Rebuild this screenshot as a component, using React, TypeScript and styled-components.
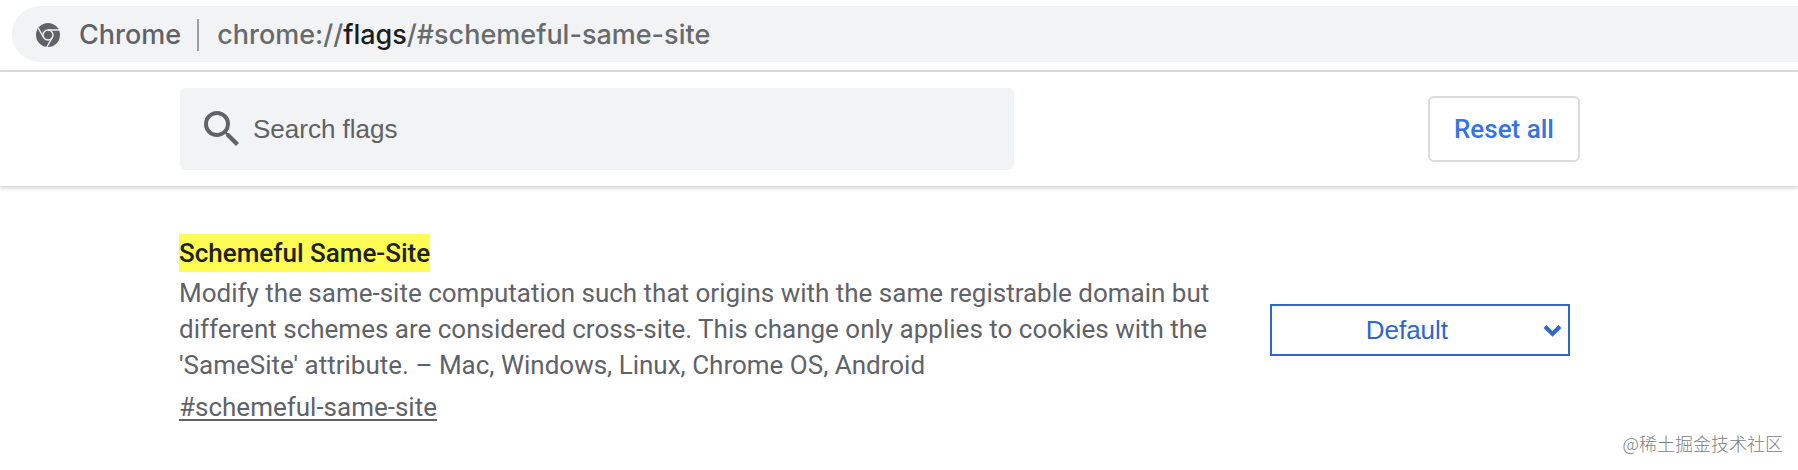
import React from "react";
import styled, { createGlobalStyle } from "styled-components";

const GlobalStyle = createGlobalStyle`
  *, *::before, *::after { box-sizing: border-box; }
  body {
    margin: 0;
    background: #fff;
    color: #5f6368;
    font-family: Roboto, "Liberation Sans", sans-serif;
    font-size: 26px;
    line-height: 36px;
  }
`;

const Toolbar = styled.header`
  padding: 6px 0 8px 12px;
  border-bottom: 2px solid #dadce0;
`;

const Omnibox = styled.div`
  display: flex;
  align-items: center;
  height: 56px;
  padding-top: 1px;
  padding-left: 24px;
  border-radius: 28px 0 0 28px;
  background: #f1f3f4;
  font-family: Inter, "Liberation Sans", sans-serif;
  font-size: 27px;
  font-weight: 500;
  white-space: nowrap;
`;

const SiteChip = styled.button`
  display: flex;
  align-items: center;
  gap: 19px;
  padding: 0;
  border: 0;
  background: none;
  color: #5f6368;
  font: inherit;
`;

const Separator = styled.span`
  width: 2px;
  height: 32px;
  margin: 0 18px 0 16px;
  background: #9e9fa1;
`;

const Address = styled.span`
  color: #686a6c;
`;

const Host = styled.span`
  color: #1b1c1e;
`;

const FlagsHeader = styled.div`
  display: flex;
  align-items: center;
  justify-content: space-between;
  padding: 16px 218px 16px 180px;
  box-shadow: 0 2px 4px rgba(0, 0, 0, 0.18);
`;

const SearchBox = styled.label`
  display: flex;
  align-items: center;
  gap: 7px;
  flex: 0 1 834px;
  height: 82px;
  padding: 0 18px;
  border-radius: 6px;
  background: #f1f3f4;
`;

const SearchInput = styled.input`
  flex: 1;
  min-width: 0;
  padding: 0;
  border: 0;
  outline: 0;
  background: none;
  color: #202124;
  font: 26px/36px "Liberation Sans", Arial, sans-serif;

  &::placeholder {
    color: #616161;
    opacity: 1;
  }
`;

const ResetButton = styled.button`
  height: 66px;
  padding: 0 24px;
  border: 2px solid #dadce0;
  border-radius: 6px;
  background: #fff;
  color: #3574e2;
  font: 500 26px/36px Roboto, sans-serif;
  white-space: nowrap;
`;

const Experiment = styled.main`
  display: grid;
  grid-template-columns: minmax(0, 3fr) minmax(0, 1fr);
  align-items: center;
  padding: 48px 218px 0 179px;
`;

const Title = styled.h1`
  width: fit-content;
  margin: 0 0 3px;
  background: #fffc54;
  color: #202124;
  font-size: 26px;
  font-weight: 500;
  line-height: 38px;
`;

const Description = styled.p`
  margin: 0 0 6px;
`;

const Permalink = styled.a`
  color: inherit;
  text-underline-offset: 3px;
  text-decoration-thickness: 2px;
`;

const SelectWrap = styled.div`
  position: relative;
  margin: 0 10px 0 40px;
`;

const Select = styled.select`
  display: block;
  width: 100%;
  height: 52px;
  padding: 0 26px 0 0;
  border: 2px solid #2f67ca;
  border-radius: 0;
  appearance: none;
  background: #fff;
  color: #2f67ca;
  font: 26px/36px "Liberation Sans", Arial, sans-serif;
  text-align: center;
  text-align-last: center;
`;

const Chevron = styled.svg`
  position: absolute;
  top: 20px;
  right: 8px;
  pointer-events: none;
`;

const Watermark = styled.footer`
  padding: 0 15px;
  color: #808080;
  font: 300 18px/36px "Noto Sans CJK SC", sans-serif;
  text-align: right;
`;

const ChromeIcon = () => (
  <svg width="24" height="24" viewBox="0 0 24 24" aria-hidden="true">
    <circle cx="12" cy="12" r="12" fill="#5f6368" />
    <g fill="none" stroke="#f1f3f4" strokeWidth="1.4">
      <circle cx="12" cy="12" r="5" />
      <path d="M12 7H23M7.7 14.5L2.2 5M16.3 14.5L10.8 24" />
    </g>
  </svg>
);

const SearchIcon = () => (
  <svg width="48" height="48" viewBox="0 0 24 24" fill="#5f6368" aria-hidden="true">
    <path d="M15.5 14h-.79l-.28-.27A6.471 6.471 0 0 0 16 9.5 6.5 6.5 0 1 0 9.5 16c1.61 0 3.09-.59 4.23-1.57l.27.28v.79l5 4.99L20.49 19l-4.99-5zm-6 0C7.01 14 5 11.99 5 9.5S7.01 5 9.5 5 14 7.01 14 9.5 11.99 14 9.5 14z" />
  </svg>
);

export default function App() {
  return (
    <>
      <GlobalStyle />
      <Toolbar>
        <Omnibox>
          <SiteChip type="button">
            <ChromeIcon />
            Chrome
          </SiteChip>
          <Separator />
          <Address>
            chrome://<Host>flags</Host>/#schemeful-same-site
          </Address>
        </Omnibox>
      </Toolbar>
      <FlagsHeader>
        <SearchBox>
          <SearchIcon />
          <SearchInput type="text" placeholder="Search flags" aria-label="Search flags" />
        </SearchBox>
        <ResetButton type="button">Reset all</ResetButton>
      </FlagsHeader>
      <Experiment>
        <div>
          <Title id="flag-title">Schemeful Same-Site</Title>
          <Description>
            Modify the same-site computation such that origins with the same registrable domain but
            different schemes are considered cross-site. This change only applies to cookies with the
            'SameSite' attribute. – Mac, Windows, Linux, Chrome OS, Android
          </Description>
          <Permalink href="#schemeful-same-site">#schemeful-same-site</Permalink>
        </div>
        <SelectWrap>
          <Select aria-labelledby="flag-title" defaultValue="Default">
            <option>Default</option>
            <option>Enabled</option>
            <option>Disabled</option>
          </Select>
          <Chevron width="19" height="13" viewBox="0 0 19 13" aria-hidden="true">
            <path d="M2 2.5L9.5 10L17 2.5" fill="none" stroke="#2f67ca" strokeWidth="4" />
          </Chevron>
        </SelectWrap>
      </Experiment>
      <Watermark>@稀土掘金技术社区</Watermark>
    </>
  );
}
